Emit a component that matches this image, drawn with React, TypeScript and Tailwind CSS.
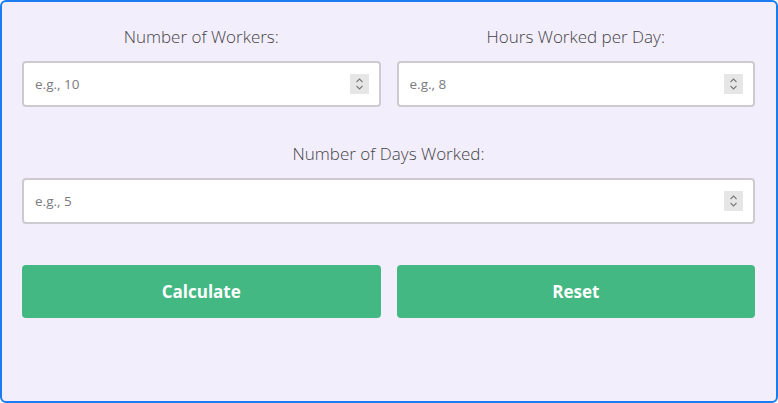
import { useState } from 'react';

function Spinner() {
  return (
    <div className="flex h-[20px] w-[19px] flex-col items-center justify-center bg-[#e6e6e6]">
      <svg width="9" height="14" viewBox="0 0 9 14" fill="none" stroke="#7a7a7a" strokeWidth="1.1">
        <path d="M1.5 5 L4.5 2 L7.5 5" />
        <path d="M1.5 9 L4.5 12 L7.5 9" />
      </svg>
    </div>
  );
}

function NumberField({ label, placeholder, value, onChange }: {
  label: string;
  placeholder: string;
  value: string;
  onChange: (v: string) => void;
}) {
  return (
    <div className="flex flex-col">
      <label className="mb-[12px] text-center text-[17px] font-light leading-[24px] text-[#444446]">{label}</label>
      <div className="flex h-[46px] items-center rounded-[4px] border-2 border-[#cdcbd0] bg-white pl-[11px] pr-[10px]">
        <input
          className="min-w-0 flex-1 bg-transparent text-[13.5px] text-[#333] outline-none placeholder:text-[#7b7b80]"
          placeholder={placeholder}
          value={value}
          onChange={(e) => onChange(e.target.value)}
        />
        <Spinner />
      </div>
    </div>
  );
}

export default function App() {
  const [workers, setWorkers] = useState('');
  const [hours, setHours] = useState('');
  const [days, setDays] = useState('');

  function reset() {
    setWorkers('');
    setHours('');
    setDays('');
  }

  return (
    <div
      className="h-[403px] w-[778px] rounded-[6px] border-2 border-[#1b7cf2] bg-[#f3eefc] pl-[20px] pr-[21px] pt-[23px]"
      style={{ fontFamily: '"Open Sans", "Noto Sans", sans-serif' }}
    >
      <div className="grid grid-cols-2 gap-x-[16px]">
        <NumberField label="Number of Workers:" placeholder="e.g., 10" value={workers} onChange={setWorkers} />
        <NumberField label="Hours Worked per Day:" placeholder="e.g., 8" value={hours} onChange={setHours} />
      </div>

      <div className="mt-[35px]">
        <NumberField label="Number of Days Worked:" placeholder="e.g., 5" value={days} onChange={setDays} />
      </div>

      <div className="mt-[41px] grid grid-cols-2 gap-x-[16px]">
        <button className="h-[53px] rounded-[4px] bg-[#43b883] text-[17px] font-bold text-white">Calculate</button>
        <button onClick={reset} className="h-[53px] rounded-[4px] bg-[#43b883] text-[17px] font-bold text-white">Reset</button>
      </div>
    </div>
  );
}
